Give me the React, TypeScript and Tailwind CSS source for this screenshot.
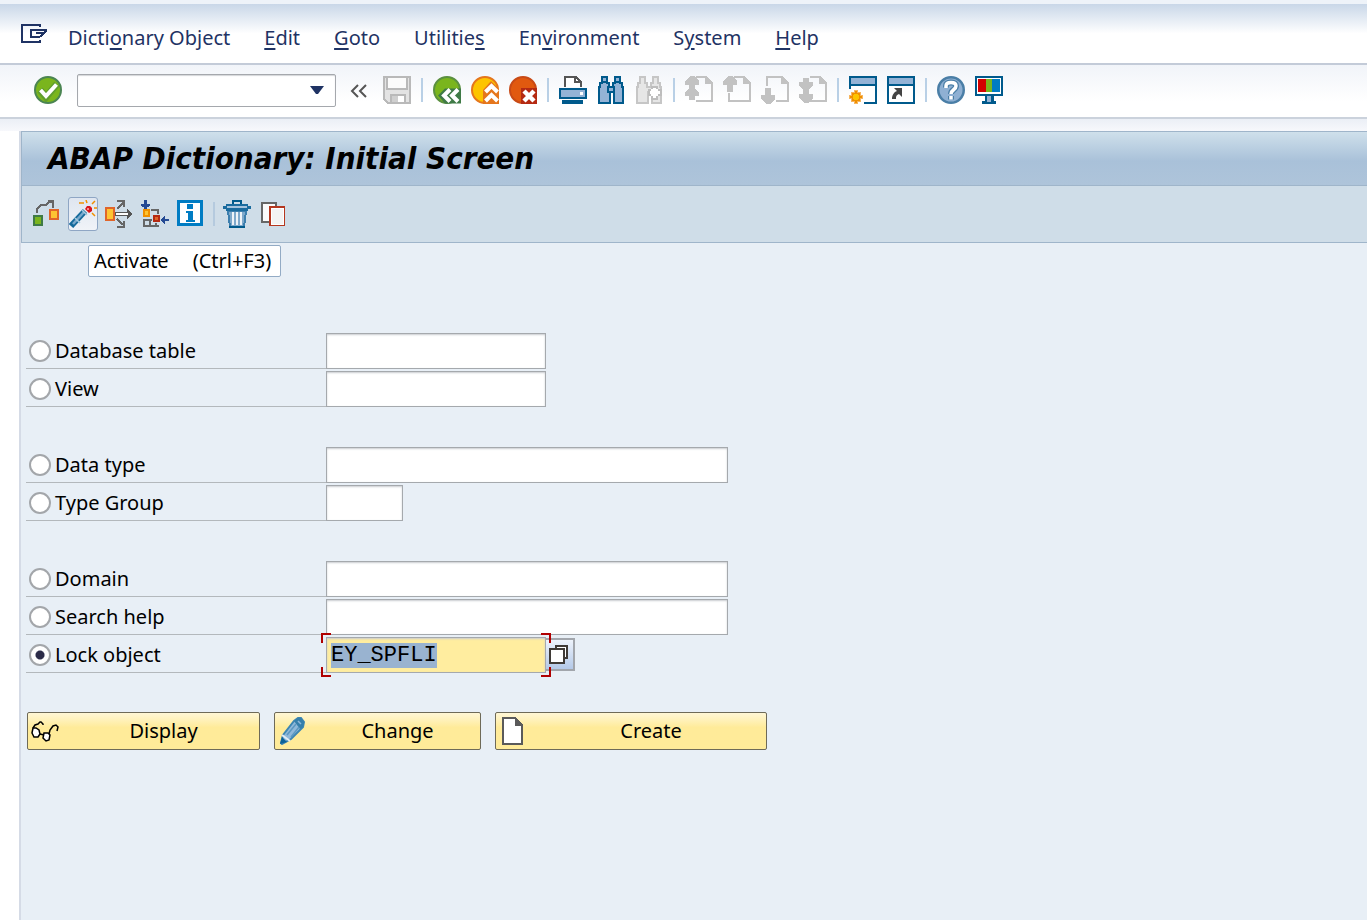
import { useEffect, useRef, useState } from "react";
import type { ReactNode } from "react";

function Icon({ children, smooth = false }: { children: ReactNode; smooth?: boolean }) {
  return (
    <svg
      viewBox="0 0 28 28"
      className="size-7 shrink-0"
      fill="none"
      shapeRendering={smooth ? "auto" : "crispEdges"}
      aria-hidden="true"
    >
      {children}
    </svg>
  );
}

const CheckIcon = () => (
  <Icon smooth>
    <circle cx="14" cy="14" r="13" fill="#7ab51d" stroke="#4b8552" strokeWidth="2" />
    <path d="M6 14l6 7L23 8" stroke="#4f8f3a" strokeWidth="7" opacity=".6" />
    <path d="M6.500 14l5.500 6L22.500 8.500" stroke="#fff" strokeWidth="4" />
  </Icon>
);

const CollapseIcon = () => (
  <Icon smooth>
    <path d="M13 9l-6 6 6 6M21 9l-6 6 6 6" stroke="#555" strokeWidth="2" />
  </Icon>
);

const SaveIcon = () => (
  <Icon>
    <path d="M1 1h26v26H5l-4-4z" fill="#e3e3e3" stroke="#b9b9b9" strokeWidth="2" />
    <path d="M4 1h20v12H4z" fill="#fbfbfb" stroke="#b9b9b9" strokeWidth="2" />
    <path d="M8 27v-8h14v8z" fill="#fff" stroke="#b9b9b9" strokeWidth="2" />
    <path d="M9 20h6v6H9z" fill="#cfcfcf" />
  </Icon>
);

const BackIcon = () => (
  <Icon smooth>
    <circle cx="14" cy="14" r="13" fill="#7ab51d" stroke="#5b9040" strokeWidth="2" />
    <path d="M5 19.500l7-7h16v15H12z" fill="#3f7a46" />
    <path d="M17 13.500l-6 6 6 6M25 13.500l-6 6 6 6" stroke="#fff" strokeWidth="4" />
  </Icon>
);

const ExitIcon = () => (
  <Icon smooth>
    <circle cx="14" cy="14" r="13" fill="#fdc400" stroke="#e5761c" strokeWidth="2" />
    <path d="M12 14l8-9 8 8v15H12z" fill="#e5761c" />
    <path d="M14.500 16l6-6 6 6M14.500 25l6-6 6 6" stroke="#fff" strokeWidth="4" />
  </Icon>
);

const CancelIcon = () => (
  <Icon smooth>
    <circle cx="14" cy="14" r="13" fill="#e1590f" stroke="#c84a16" strokeWidth="2" />
    <path d="M12 12h16v16H12z" fill="#b52a12" />
    <path d="M15 15l10 10M25 15L15 25" stroke="#fff" strokeWidth="4.500" />
  </Icon>
);

const PrintIcon = () => (
  <Icon>
    <path d="M6 11V1h11l5 5v5" fill="#fff" stroke="#555" strokeWidth="2" />
    <path d="M16 1v5h6" stroke="#555" strokeWidth="2" />
    <path d="M1 13h26v9H1z" fill="#94b3d6" stroke="#005a8c" strokeWidth="2" />
    <path d="M21 16h3v3h-3z" fill="#fff" />
    <path d="M3 24h21v4H3z" fill="#005a8c" />
  </Icon>
);

const FindIcon = () => (
  <Icon>
    <path
      d="M5 1h5v6h2v4h4V7h2V1h5v6h2v4h1v16h-9V16h-4v11H2V11h1V7h2z"
      fill="#94b3d6"
      stroke="#005a8c"
      strokeWidth="2"
    />
    <path d="M5 6h5M18 6h5M11 10v7M17 10v7" stroke="#005a8c" strokeWidth="2" />
  </Icon>
);

const FindNextIcon = () => (
  <Icon>
    <path
      d="M5 1h5v6h2v4h4V7h2V1h5v6h2v4h1v16h-9V16h-4v11H2V11h1V7h2z"
      fill="#e6e6e6"
      stroke="#c6c6c6"
      strokeWidth="2"
    />
    <path d="M17 11h5v3h4v5h-4v4h-5v-4h-3v-5h3z" fill="#fff" stroke="#bdbdbd" strokeWidth="2" />
    <path d="M16 13h7v7h-7z" fill="#fff" />
  </Icon>
);

type PageDirection = "first" | "previous" | "next" | "last";

const PAGE_ARROWS: Record<PageDirection, string> = {
  first: "M5 0h4l5 5v4h-4v4H4V9H0V5zM5 12h4l5 4v4h-4v4H4v-4H0v-4z",
  previous: "M5 0h4l5 5v4h-4v7H4V9H0V5z",
  next: "M4 12h6v7h4v4l-5 5H5l-5-5v-4h4z",
  last: "M4 2h6v4h4v4l-5 4H5l-5-4V6h4zM4 14h6v4h4v4l-5 5H5l-5-5v-4h4z",
};

const PageIcon = ({ direction }: { direction: PageDirection }) => (
  <Icon>
    <path
      d={direction === "next" ? "M6 10V1h15l6 6v18H15" : "M11 1h10l6 6v18H11"}
      stroke="#c2c2c2"
      strokeWidth="2"
    />
    {direction === "previous" && <path d="M6 17v8h6" stroke="#c2c2c2" strokeWidth="2" />}
    <path d="M20 0v8h8z" fill="#c2c2c2" />
    <path d={PAGE_ARROWS[direction]} fill="#c2c2c2" />
  </Icon>
);

const NewSessionIcon = () => (
  <Icon>
    <path d="M1 13V1h26v26H15" fill="#fff" stroke="#005a8c" strokeWidth="2" />
    <path d="M2 2h24v6H2z" fill="#94b3d6" />
    <path d="M2 9h24" stroke="#005a8c" strokeWidth="2" />
    <path d="M5 14h4v2h3v3h2v4h-2v3H9v2H5v-2H2v-3H0v-4h2v-3h3z" fill="#f6b660" />
    <path d="M6 15h2v12H6zM1 20h12v2H1zM3 17h8v8H3z" fill="#f09000" />
    <path d="M5 18h4v1h1v4H9v1H5v-1H4v-4h1z" fill="#fdc400" />
  </Icon>
);

const ShortcutIcon = () => (
  <Icon>
    <path d="M1 1h26v26H1z" fill="#fff" stroke="#005a8c" strokeWidth="2" />
    <path d="M2 2h24v6H2z" fill="#94b3d6" />
    <path d="M2 9h24" stroke="#005a8c" strokeWidth="2" />
    <path d="M7 12h8v9l-3-3c-3 1-3 3-3 5H5c0-4 2-7 5-8z" fill="#444" shapeRendering="auto" />
  </Icon>
);

const HelpIcon = () => (
  <Icon smooth>
    <circle cx="14" cy="14" r="12.750" fill="#8fb0d3" stroke="#4a7ea6" strokeWidth="2.500" />
    <path d="M9 11.500V10c0-2.500 2-3.500 5-3.500s5 1 5 3.500c0 4-5 3.500-5 8M14 20v3.500" stroke="#4a7ea6" strokeWidth="6" />
    <path d="M9 12V10c0-2.500 2-3.500 5-3.500s5 1 5 3.500c0 4-5 3.500-5 8M14 20v3.500" stroke="#fff" strokeWidth="3.500" />
  </Icon>
);

const LayoutIcon = () => (
  <Icon>
    <path d="M1 1h26v18H1z" fill="#fff" stroke="#005a8c" strokeWidth="2" />
    <path d="M3 3h8v13H3z" fill="#d20000" />
    <path d="M11 3h6v13h-6z" fill="#7ab51d" />
    <path d="M17 3h8v13h-8z" fill="#007cc3" />
    <path d="M11 20v5M17 20v5M7 26h14" stroke="#005a8c" strokeWidth="3" />
    <path d="M12 20h4v6h-4z" fill="#94b3d6" />
  </Icon>
);

const CheckObjectIcon = () => (
  <Icon>
    <path d="M1 16h8v9H1z" fill="#7ab51d" stroke="#3f7a46" strokeWidth="2" />
    <path d="M17 10h8v9h-8z" fill="#fdc433" stroke="#e0652a" strokeWidth="2" />
    <path d="M4 13V9l4-4h4M15 1h5v7M12 6l3-3 5-2" stroke="#666" strokeWidth="2" />
  </Icon>
);

const ActivateIcon = () => (
  <Icon smooth>
    <path d="M2 26L16 11" stroke="#156a9b" strokeWidth="6" />
    <path d="M4 24L15 12" stroke="#7aa9cc" strokeWidth="2.500" />
    <path d="M6 18l5 5M13 10l5 5" stroke="#a8cbe0" strokeWidth="1.500" />
    <path d="M16 9l2-3h3l2 2v3l-3 2z" fill="#d9151b" />
    <path d="M18 8h2v2h-2z" fill="#f2878a" />
    <path
      d="M18 3l-1-3M23 4l3-3M10 3h5M25 8h3M23 13l3 3"
      stroke="#f09000"
      strokeWidth="1.500"
    />
  </Icon>
);

const WhereUsedIcon = () => (
  <Icon>
    <path d="M12 9l6-6M12 1h7v6M12 19l6 6M12 27h7v-6" stroke="#666" strokeWidth="2" />
    <path d="M10 12h12V9l6 5-6 5v-3H10z" fill="#555" />
    <path d="M11 13h12v2H11z" fill="#fff" />
    <path d="M1 8h8v12H1z" fill="#fdc433" stroke="#e0652a" strokeWidth="2" />
  </Icon>
);

const HierarchyIcon = () => (
  <Icon>
    <path d="M3 0h3v4h3v2H8v1H6v2H3V7H1V6H0V4h3z" fill="#254a94" />
    <path d="M19 20l5-5v4h4v2h-4v4z" fill="#254a94" />
    <path d="M10 10h7v4M3 19v8M9 19v8M15 23v4M2 20h9M2 26h16" stroke="#666" strokeWidth="2" />
    <path d="M3 10h5v6H3z" fill="#fdc433" stroke="#f09000" strokeWidth="2" />
    <path d="M13 16h5v5h-5z" fill="#e0652a" stroke="#b52a12" strokeWidth="2" />
  </Icon>
);

const InfoIcon = () => (
  <Icon>
    <path d="M0 0h26v26H0z" fill="#007cc3" />
    <path d="M3 3h20v20H3z" fill="#fff" />
    <path d="M10 4h6v5h-6zM9 11h7v9h2v2H9v-2h2v-7H9z" fill="#007cc3" />
  </Icon>
);

const TrashIcon = () => (
  <Icon>
    <path d="M5 11h18l-2 16H7z" fill="#7fa9cb" stroke="#3d7fae" strokeWidth="2" />
    <path d="M10 12v13M14 12v13M18 12v13" stroke="#eef3f8" strokeWidth="2" />
    <path d="M6 27h16" stroke="#005a8c" strokeWidth="2" />
    <path d="M10 4V1h8v3" stroke="#005a8c" strokeWidth="2" />
    <path d="M3 4h22v2h3v3h-3v2H3V9H0V6h3z" fill="#1a6b9e" />
    <path d="M4 6h20v2H4z" fill="#a5c3dd" />
  </Icon>
);

const CopyIcon = () => (
  <Icon>
    <path d="M3 3h14v19H3z" fill="#fbfbfb" stroke="#666" strokeWidth="2" />
    <path d="M11 7h14v18H11z" fill="#f3f3f3" stroke="#b5371f" strokeWidth="2" />
    <path d="M12 8h12v16H12z" stroke="#fff" strokeWidth="1" />
  </Icon>
);

const GlassesIcon = () => (
  <svg viewBox="0 0 28 24" className="h-6 w-7" fill="none" stroke="#000" strokeWidth="1.500" aria-hidden="true">
    <path d="M2 9l2-3 3-1 2-2h1l2 2v1M18 15l1-4 3-4 3-1 2 2-1 4M9 15l4 1" />
    <path d="M2 9l-1 5 2 4h4l2-3-1-4-3-2zM13 14l-1 5 3 3 3-1 1-5-2-2z" fill="#fff" />
  </svg>
);

const PencilIcon = () => (
  <svg viewBox="-2 0 27 28" className="h-7 w-[27px]" fill="none" aria-hidden="true">
    <path d="M3 18L14 4l4-3h3l3 4-1 5L11 22l-9 5-1-1z" fill="#8fb8da" stroke="#3d86b3" strokeWidth="2" />
    <path d="M14 4l4-3h3l3 4-1 5-3 2z" fill="#357fab" />
    <path d="M18 4l3 3" stroke="#8fb8da" strokeWidth="1.500" />
    <path d="M0 27l2-7 5 5z" fill="#0c6299" />
    <path d="M2 18l8 6" stroke="#e2edf5" strokeWidth="2" />
    <path d="M7 18l9-11M11 20l8-10" stroke="#5b98c0" strokeWidth="1.500" />
  </svg>
);

const DocumentIcon = () => (
  <svg viewBox="-3 0 26 28" className="h-7 w-[26px]" fill="none" shapeRendering="crispEdges" aria-hidden="true">
    <path d="M1 1h12l7 7v19H1z" fill="#fff" stroke="#5a5a5a" strokeWidth="2" />
    <path d="M13 1v8h8z" fill="#5a5a5a" />
  </svg>
);

const MENU: [string, string, string][] = [
  ["Dicti", "o", "nary Object"],
  ["", "E", "dit"],
  ["", "G", "oto"],
  ["Utilitie", "s", ""],
  ["En", "v", "ironment"],
  ["S", "y", "stem"],
  ["", "H", "elp"],
];

type Tool = { label: string; icon: ReactNode; disabled?: boolean };

const TOOL_GROUPS: Tool[][] = [
  [
    { label: "Hide command field", icon: <CollapseIcon /> },
    { label: "Save", icon: <SaveIcon />, disabled: true },
  ],
  [
    { label: "Back", icon: <BackIcon /> },
    { label: "Exit", icon: <ExitIcon /> },
    { label: "Cancel", icon: <CancelIcon /> },
  ],
  [
    { label: "Print", icon: <PrintIcon /> },
    { label: "Find", icon: <FindIcon /> },
    { label: "Find next", icon: <FindNextIcon />, disabled: true },
  ],
  [
    { label: "First page", icon: <PageIcon direction="first" />, disabled: true },
    { label: "Previous page", icon: <PageIcon direction="previous" />, disabled: true },
    { label: "Next page", icon: <PageIcon direction="next" />, disabled: true },
    { label: "Last page", icon: <PageIcon direction="last" />, disabled: true },
  ],
  [
    { label: "New session", icon: <NewSessionIcon /> },
    { label: "Create shortcut", icon: <ShortcutIcon /> },
  ],
  [
    { label: "Help", icon: <HelpIcon /> },
    { label: "Customize local layout", icon: <LayoutIcon /> },
  ],
];

const ToolButton = ({ tool }: { tool: Tool }) => (
  <button type="button" aria-label={tool.label} disabled={tool.disabled} className="shrink-0">
    {tool.icon}
  </button>
);

type Field = { id: string; label: string; width: string };

const FIELD_GROUPS: Field[][] = [
  [
    { id: "table", label: "Database table", width: "w-[220px]" },
    { id: "view", label: "View", width: "w-[220px]" },
  ],
  [
    { id: "type", label: "Data type", width: "w-[402px]" },
    { id: "group", label: "Type Group", width: "w-[77px]" },
  ],
  [
    { id: "domain", label: "Domain", width: "w-[402px]" },
    { id: "search", label: "Search help", width: "w-[402px]" },
    { id: "lock", label: "Lock object", width: "w-[220px]" },
  ],
];

const ACTIONS = [
  { label: "Display", width: "w-[233px]", icon: <GlassesIcon /> },
  { label: "Change", width: "w-[207px]", icon: <PencilIcon /> },
  { label: "Create", width: "w-[272px]", icon: <DocumentIcon /> },
];

export default function App() {
  const [selected, setSelected] = useState("lock");
  const [values, setValues] = useState<Record<string, string>>({ lock: "EY_SPFLI" });
  const lockRef = useRef<HTMLInputElement>(null);

  useEffect(() => {
    lockRef.current?.focus();
    lockRef.current?.select();
  }, []);

  return (
    <div className="flex min-h-screen flex-col bg-white font-['Noto_Sans',sans-serif] text-[20px] leading-7 text-black">
      <header className="border-b-2 border-[#c3cbd8] border-t-4 border-t-[#eef3f9] bg-linear-to-b from-[#c9d7e8] to-white to-50%">
        <nav aria-label="Menu bar" className="flex h-[59px] items-center gap-[34px] pt-2 pl-[21px] text-[#1f3364]">
          <div className="flex items-center gap-5">
            <button type="button" aria-label="System menu" className="pb-2">
              <svg viewBox="0 0 27 20" className="h-5 w-[27px]" fill="none" stroke="#1f3364" strokeWidth="2" shapeRendering="crispEdges" aria-hidden="true">
                <path d="M19 3V1H1v17h18v-2" />
                <path d="M26 6H10v7h9M15 9h8M25 7l-3 3M22 10l-3 3" />
              </svg>
            </button>
            <MenuItem parts={MENU[0]} />
          </div>
          {MENU.slice(1).map((parts) => (
            <MenuItem key={parts.join("")} parts={parts} />
          ))}
        </nav>
      </header>

      <div className="flex h-[54px] items-center border-b-2 border-[#cbd2dc] bg-linear-to-b from-[#f1f4f9] to-white to-70% pb-[2px] pl-[34px]">
        <button type="button" aria-label="Enter" className="mr-[15px]">
          <CheckIcon />
        </button>
        <div className="mr-[9px] flex h-[33px] w-[259px] items-center rounded-[2px] border border-[#a5a8ad] bg-white shadow-[inset_0_1px_1px_#d4d6d9]">
          <input aria-label="Command field" className="h-full min-w-0 flex-1 px-1 outline-none" />
          <button type="button" aria-label="Command history" className="px-[10px]">
            <svg viewBox="0 0 16 8" className="h-2 w-4" aria-hidden="true">
              <path d="M1 0h14L9 8H7z" fill="#1f3364" />
            </svg>
          </button>
        </div>
        <div className="flex items-center gap-[10px]">
          {TOOL_GROUPS.map((group, index) => (
            <div key={index} className="flex items-center gap-[10px]">
              {index > 0 && <span className="h-6 w-[2px] bg-[#b9d0e6]" />}
              {group.map((tool) => (
                <ToolButton key={tool.label} tool={tool} />
              ))}
            </div>
          ))}
        </div>
      </div>

      <div className="h-3 bg-linear-to-b from-[#ebeff6] to-[#f7f8fc]" />

      <main className="ml-[19px] flex flex-1 flex-col border-l-2 border-[#d5dbe6] bg-[#e8eff6]">
        <h1 className="flex h-[55px] items-center border border-r-0 border-[#9fb5ca] bg-linear-to-b from-[#cfe0eb] via-[#a9c1d9] via-55% to-[#aec4da] pb-[2px] pl-[26px] font-['DejaVu_Sans_Condensed','DejaVu_Sans',sans-serif] text-[31px] font-bold italic">
          ABAP Dictionary: Initial Screen
        </h1>
        <div className="flex h-[57px] items-center gap-2 border-b border-l border-[#9fb5ca] bg-[#cfdde8] pl-[11px]">
          <ToolButton tool={{ label: "Check", icon: <CheckObjectIcon /> }} />
          <div className="relative -mx-px">
            <button
              type="button"
              aria-label="Activate"
              aria-describedby="activate-tip"
              className="flex h-[34px] w-[30px] items-center justify-center rounded-[3px] border border-[#8fa6c4] bg-linear-to-b from-[#dfe6f0] to-[#f0f3f8]"
            >
              <ActivateIcon />
            </button>
            <div
              id="activate-tip"
              role="tooltip"
              className="absolute top-12 left-5 flex h-8 w-[193px] items-center gap-6 rounded-[2px] border border-[#93abc5] bg-white px-[5px] whitespace-nowrap"
            >
              <span>Activate</span>
              <span>(Ctrl+F3)</span>
            </div>
          </div>
          <ToolButton tool={{ label: "Where-used list", icon: <WhereUsedIcon /> }} />
          <ToolButton tool={{ label: "Object hierarchy", icon: <HierarchyIcon /> }} />
          <ToolButton tool={{ label: "Information", icon: <InfoIcon /> }} />
          <span className="h-6 w-[2px] bg-[#b5cade]" />
          <ToolButton tool={{ label: "Delete", icon: <TrashIcon /> }} />
          <ToolButton tool={{ label: "Copy", icon: <CopyIcon /> }} />
        </div>

        <form className="flex flex-col pt-[88px] pl-[5px]" onSubmit={(event) => event.preventDefault()}>
          <div className="flex flex-col gap-[38px]">
            {FIELD_GROUPS.map((group) => (
              <div key={group[0].id} className="flex flex-col">
                {group.map((field) => {
                  const active = field.id === "lock";
                  return (
                    <div key={field.id} className="flex h-[38px] items-end">
                      <label className="flex h-9 w-[300px] items-center gap-1 border-b border-[#b3b8bc] pl-[3px]">
                        <input
                          type="radio"
                          name="object"
                          checked={selected === field.id}
                          onChange={() => setSelected(field.id)}
                          className="size-[22px] appearance-none rounded-full border-2 border-[#a3a6aa] bg-white checked:bg-radial checked:from-[#2b2b48] checked:from-30% checked:to-white checked:to-40%"
                        />
                        <span>{field.label}</span>
                      </label>
                      <div className="relative">
                        <input
                          ref={active ? lockRef : undefined}
                          aria-label={`${field.label} name`}
                          value={values[field.id] ?? ""}
                          onChange={(event) => setValues({ ...values, [field.id]: event.target.value })}
                          className={`block h-9 border border-[#a5a9ad] px-1 font-['Liberation_Mono',monospace] text-[22px] leading-[26px] shadow-[inset_0_1px_2px_#c9ccd0] outline-none selection:bg-[#99b3d0] selection:text-black ${field.width} ${active ? "bg-[#ffed9f]" : "bg-white"}`}
                        />
                        {active && (
                          <>
                            <span className="absolute -top-1 -left-[5px] size-[10px] border-t-2 border-l-2 border-[#b00000]" />
                            <span className="absolute -bottom-1 -left-[5px] size-[10px] border-b-2 border-l-2 border-[#b00000]" />
                            <span className="absolute -top-1 -right-[5px] z-10 size-[10px] border-t-2 border-r-2 border-[#b00000]" />
                            <span className="absolute -right-[5px] -bottom-1 z-10 size-[10px] border-r-2 border-b-2 border-[#b00000]" />
                          </>
                        )}
                      </div>
                      {active && (
                        <button
                          type="button"
                          aria-label="Possible entries"
                          className="mb-[2px] flex h-[33px] w-[29px] items-center border-2 border-l-0 border-[#a2a6ac] bg-linear-to-b from-[#eef3fb] to-[#b4c9e8] pl-[3px]"
                        >
                          <svg viewBox="0 0 20 20" className="size-5" fill="#fff" stroke="#3f3a36" strokeWidth="2" shapeRendering="crispEdges" aria-hidden="true">
                            <path d="M7 1h11v12H7z" />
                            <path d="M1 4h14v14H1z" />
                          </svg>
                        </button>
                      )}
                    </div>
                  );
                })}
              </div>
            ))}
          </div>
          <div className="flex gap-[14px] pt-[39px] pl-px">
            {ACTIONS.map((action) => (
              <button
                key={action.label}
                type="button"
                className={`flex h-[38px] items-center rounded-[2px] border border-[#6e6a58] bg-linear-to-b from-[#fff7d6] to-[#ffeb99] to-40% ${action.width}`}
              >
                <span className="flex w-10 justify-start pl-[3px]">{action.icon}</span>
                <span className="flex-1 text-center">{action.label}</span>
              </button>
            ))}
          </div>
        </form>
      </main>
    </div>
  );
}

function MenuItem({ parts }: { parts: [string, string, string] }) {
  return (
    <button type="button" className="whitespace-nowrap">
      {parts[0]}
      <span className="underline underline-offset-3">{parts[1]}</span>
      {parts[2]}
    </button>
  );
}
